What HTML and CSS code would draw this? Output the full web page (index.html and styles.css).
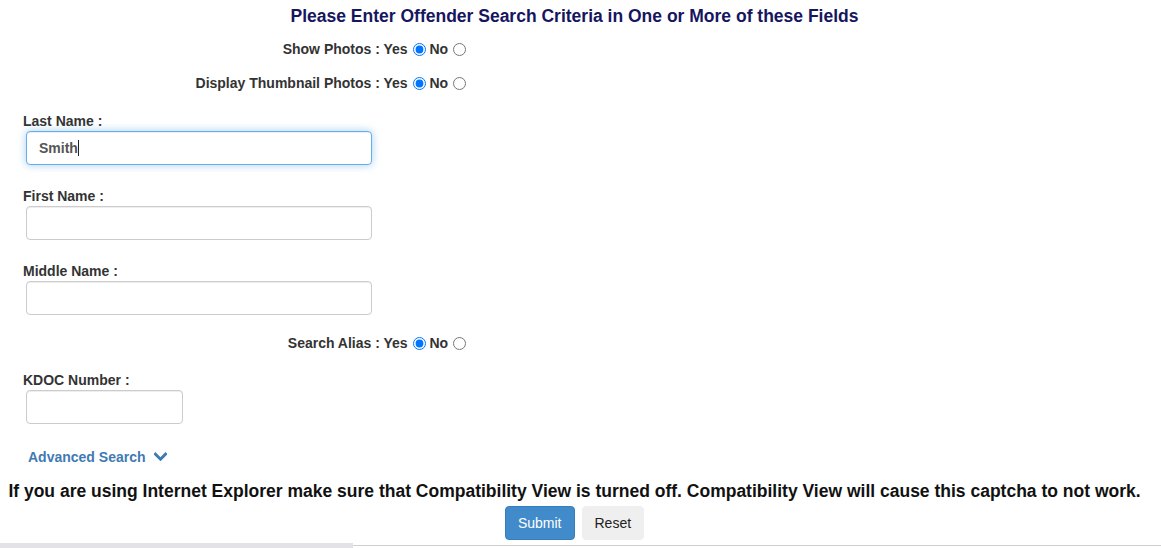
FILE: index.html
```html
<!DOCTYPE html>
<html>
<head>
<meta charset="utf-8">
<title>Offender Search</title>
<link rel="stylesheet" href="styles.css">
</head>
<body>
<div class="page">
  <div class="title">Please Enter Offender Search Criteria in One or More of these Fields</div>

  <div class="opt-row first">Show Photos : Yes <input type="radio" name="photos" checked> No <input type="radio" name="photos"></div>
  <div class="opt-row second">Display Thumbnail Photos : Yes <input type="radio" name="thumbs" checked> No <input type="radio" name="thumbs"></div>

  <div class="field first-field">
    <label class="field-label" for="last">Last Name :</label>
    <div class="input-wrap">
      <input id="last" class="text-input focused" type="text" value="Smith">
      <span class="caret"></span>
    </div>
  </div>
  <div class="field">
    <label class="field-label" for="first">First Name :</label>
    <div class="input-wrap"><input id="first" class="text-input" type="text"></div>
  </div>
  <div class="field">
    <label class="field-label" for="middle">Middle Name :</label>
    <div class="input-wrap"><input id="middle" class="text-input" type="text"></div>
  </div>

  <div class="opt-row alias">Search Alias : Yes <input type="radio" name="alias" checked> No <input type="radio" name="alias"></div>

  <div class="field kdoc-field">
    <label class="field-label" for="kdoc">KDOC Number :</label>
    <div class="input-wrap"><input id="kdoc" class="text-input short" type="text"></div>
  </div>

  <div class="advanced"><a href="#">Advanced Search <svg class="chev" width="13" height="10" viewBox="0 0 13 10"><path d="M1.5 2.2 L6.5 7.2 L11.5 2.2" fill="none" stroke="#3f7ab3" stroke-width="3" stroke-linecap="square"/></svg></a></div>

  <div class="notice">If you are using Internet Explorer make sure that Compatibility View is turned off. Compatibility View will cause this captcha to not work.</div>

  <div class="buttons">
    <button class="btn btn-primary" type="button">Submit</button>
    <button class="btn btn-default" type="button">Reset</button>
  </div>
</div>
<div class="footer"><div class="footer-thumb"></div></div>
</body>
</html>
```

FILE: styles.css
```css
html, body {
  margin: 0;
  padding: 0;
  background: #ffffff;
}
body {
  font-family: "Liberation Sans", Arial, sans-serif;
  color: #333333;
  width: 1161px;
  height: 548px;
  overflow: hidden;
}
.page {
  width: 1149px;
}
.title {
  padding-top: 6px;
  font-size: 17.5px;
  line-height: 20px;
  font-weight: bold;
  color: #16165f;
  text-align: center;
}
.opt-row {
  width: 466px;
  text-align: right;
  font-size: 14px;
  line-height: 18px;
  font-weight: bold;
  color: #333333;
}
.opt-row input {
  margin: 0 0 0 1px;
  width: 13px;
  height: 13px;
  vertical-align: -2px;
}
.opt-row.first { margin-top: 14px; }
.opt-row.second { margin-top: 16px; }
.opt-row.alias { margin-top: 19px; margin-bottom: 19px; }

.field {
  padding-left: 23px;
  margin-top: 22px;
}
.field.first-field { margin-top: 20px; }
.field.kdoc-field { margin-top: 0; }
.field-label {
  display: block;
  font-size: 14px;
  line-height: 18px;
  font-weight: bold;
  color: #333333;
  margin-bottom: 1px;
}
.input-wrap {
  position: relative;
  margin-left: 3px;
  width: 346px;
  height: 34px;
}
.text-input {
  box-sizing: border-box;
  width: 346px;
  height: 34px;
  padding: 6px 12px;
  border: 1px solid #cccccc;
  border-radius: 4px;
  font-family: "Liberation Sans", Arial, sans-serif;
  font-size: 14px;
  font-weight: bold;
  color: #555555;
  background: #ffffff;
  box-shadow: inset 0 1px 1px rgba(0,0,0,0.075);
  outline: none;
}
.text-input.focused {
  border-color: #66afe9;
  box-shadow: inset 0 1px 1px rgba(0,0,0,0.075), 0 0 8px rgba(102,175,233,0.6);
}
.text-input.short {
  width: 157px;
}
.caret {
  position: absolute;
  left: 52px;
  top: 9px;
  width: 1px;
  height: 16px;
  background: #222222;
}
.advanced {
  margin-top: 24px;
  padding-left: 28px;
  font-size: 14px;
  line-height: 18px;
  font-weight: bold;
}
.advanced a {
  color: #3f7ab3;
  text-decoration: none;
}
.chev {
  margin-left: 5px;
  vertical-align: 0px;
}
.notice {
  margin-top: 15px;
  font-size: 17.5px;
  line-height: 20px;
  font-weight: bold;
  color: #111111;
  text-align: center;
}
.buttons {
  margin-top: 5px;
  display: flex;
  justify-content: center;
  gap: 7px;
}
.btn {
  box-sizing: border-box;
  height: 34px;
  padding: 6px 12px;
  font-family: "Liberation Sans", Arial, sans-serif;
  font-size: 14px;
  line-height: 20px;
  border-radius: 4px;
  border: 1px solid transparent;
  cursor: pointer;
}
.btn-primary {
  background: #428bca;
  border-color: #357ebd;
  color: #ffffff;
}
.btn-default {
  background: #efefef;
  border-color: #efefef;
  color: #222222;
}
.footer {
  margin-top: 2px;
  height: 6px;
  position: relative;
  border-top: 1px solid transparent;
}
.footer::after {
  content: "";
  display: block;
  position: absolute;
  left: 0;
  right: 0;
  top: 2px;
  height: 1px;
  background: #cfcfcf;
}
.footer-thumb {
  position: absolute;
  left: 0;
  top: 0;
  width: 353px;
  height: 7px;
  background: #e2e2e7;
  z-index: 1;
}
```
